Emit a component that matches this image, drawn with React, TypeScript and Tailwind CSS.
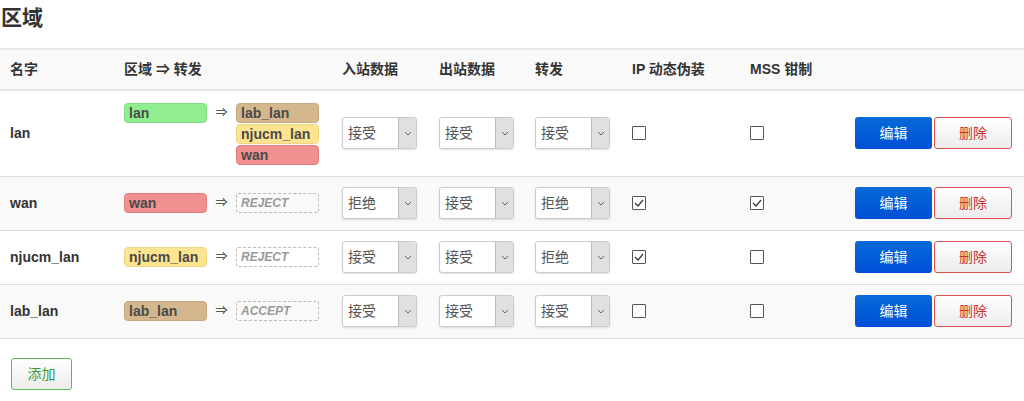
import React from 'react'

type Zone = {
  name: string
  dest: string[] | string
  input: string
  output: string
  forward: string
  masq: boolean
  mss: boolean
}

const zoneColors: Record<string, string> = {
  lan: 'bg-[#90ee90] border-[#80dd80]',
  wan: 'bg-[#f09090] border-[#e08080]',
  njucm_lan: 'bg-[#fde490] border-[#f0d680]',
  lab_lan: 'bg-[#d4b78c] border-[#c4a77c]',
}

const zones: Zone[] = [
  { name: 'lan', dest: ['lab_lan', 'njucm_lan', 'wan'], input: '接受', output: '接受', forward: '接受', masq: false, mss: false },
  { name: 'wan', dest: 'REJECT', input: '拒绝', output: '接受', forward: '拒绝', masq: true, mss: true },
  { name: 'njucm_lan', dest: 'REJECT', input: '接受', output: '接受', forward: '拒绝', masq: true, mss: false },
  { name: 'lab_lan', dest: 'ACCEPT', input: '接受', output: '接受', forward: '接受', masq: false, mss: false },
]

function Badge({ name }: { name: string }) {
  return (
    <div className={`h-[20px] w-[83px] rounded-[4px] border px-[4px] text-[14px] font-bold leading-[18px] text-[#4a4a4a] ${zoneColors[name]}`}>
      {name}
    </div>
  )
}

function Select({ value }: { value: string }) {
  return (
    <div className="flex h-[32px] w-[75px] overflow-hidden rounded-[3px] border border-[#ccc] bg-white shadow-[0_1px_2px_rgba(0,0,0,0.12)]">
      <div className="flex-1 pl-[5px] text-[14px] leading-[30px] text-[#555]">{value}</div>
      <div className="flex w-[18px] items-center justify-center border-l border-[#bbb] bg-[#e0e0e0]">
        <svg width="8" height="5" viewBox="0 0 8 5" fill="none" stroke="#666" strokeWidth="1">
          <path d="M1 1l3 3 3-3" />
        </svg>
      </div>
    </div>
  )
}

function Check({ on }: { on: boolean }) {
  return (
    <span className="flex h-[14px] w-[14px] items-center justify-center rounded-[1px] border border-[#555] bg-white">
      {on && (
        <svg width="10" height="8" viewBox="0 0 10 8" fill="none" stroke="#333" strokeWidth="1.2">
          <path d="M1 4l3 3 5-6" />
        </svg>
      )}
    </span>
  )
}

export default function App() {
  const cell = 'px-[10px] pt-[10px] pb-[11px]'
  return (
    <div className="w-[1024px] bg-white text-[#333]" style={{ fontFamily: '"Liberation Sans", "Noto Sans CJK SC", sans-serif' }}>
      <h2 className="h-[48px] pl-[1px] pt-[4px] text-[21px] font-bold leading-[28px] text-[#333]">区域</h2>
      <table className="w-[1024px] table-fixed border-collapse">
        <colgroup>
          <col className="w-[114px]" />
          <col className="w-[218px]" />
          <col className="w-[97px]" />
          <col className="w-[96px]" />
          <col className="w-[97px]" />
          <col className="w-[118px]" />
          <col className="w-[105px]" />
          <col className="w-[179px]" />
        </colgroup>
        <thead>
          <tr className="h-[41px] border-y-2 border-[#e6e6e6] bg-[#f9f9f9] text-left text-[14px] font-bold">
            <th className="px-[10px]">名字</th>
            <th className="px-[10px]">区域 ⇒ 转发</th>
            <th className="px-[10px]">入站数据</th>
            <th className="px-[10px]">出站数据</th>
            <th className="px-[10px]">转发</th>
            <th className="px-[10px]">IP 动态伪装</th>
            <th className="px-[10px]">MSS 钳制</th>
            <th></th>
          </tr>
        </thead>
        <tbody>
          {zones.map((z, i) => (
            <tr key={z.name} className={`border-b border-[#ddd] ${i % 2 === 1 ? 'bg-[#f9f9f9]' : 'bg-white'}`}>
              <td className={`${cell} text-[14px] font-bold`}>{z.name}</td>
              <td className={cell}>
                <div className={`flex items-start ${i === 0 ? 'pt-[2px]' : ''}`}>
                  <Badge name={z.name} />
                  <span className="w-[29px] text-center text-[12px] leading-[20px] text-[#333]">⇒</span>
                  {Array.isArray(z.dest) ? (
                    <div className="flex flex-col gap-[1px]">
                      {z.dest.map(d => <Badge key={d} name={d} />)}
                    </div>
                  ) : (
                    <div className="h-[20px] w-[83px] rounded-[2px] border border-dashed border-[#bbb] px-[4px] text-[12px] font-bold italic leading-[18px] text-[#999]">
                      {z.dest}
                    </div>
                  )}
                </div>
              </td>
              <td className={cell}><Select value={z.input} /></td>
              <td className={cell}><Select value={z.output} /></td>
              <td className={cell}><Select value={z.forward} /></td>
              <td className={cell}><Check on={z.masq} /></td>
              <td className={cell}><Check on={z.mss} /></td>
              <td className="pl-[10px] pr-[12px] pt-[10px] pb-[11px]">
                <div className="flex gap-[2px]">
                  <button className="h-[32px] w-[77px] rounded-[3px] bg-gradient-to-b from-[#0a6ad8] to-[#004fd6] text-[14px] text-white">编辑</button>
                  <button className="h-[32px] w-[78px] rounded-[3px] border border-[#d9534f] bg-gradient-to-b from-white to-[#ececec] text-[14px] text-[#c9302c]">删除</button>
                </div>
              </td>
            </tr>
          ))}
        </tbody>
      </table>
      <div className="pl-[11px] pt-[19px] pb-[12px]">
        <button className="h-[32px] w-[61px] rounded-[3px] border border-[#5cb85c] bg-gradient-to-b from-white to-[#ececec] text-[14px] text-[#3a9a3a]">添加</button>
      </div>
    </div>
  )
}
